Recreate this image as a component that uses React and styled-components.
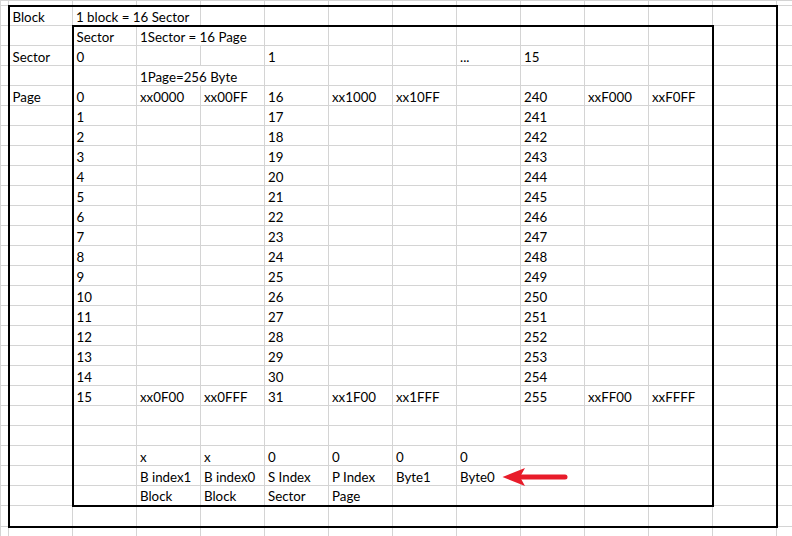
import React from 'react';
import styled, { createGlobalStyle } from 'styled-components';

const GlobalStyle = createGlobalStyle`
  html, body {
    margin: 0;
    padding: 0;
    background: #fff;
    overflow: hidden;
  }
`;

const GRID = '1px solid #d4d4d4';
const THICK = '2px solid #000';

const Sheet = styled.table`
  border-collapse: collapse;
  table-layout: fixed;
  width: ${props => props.$width}px;
  font-family: Lato, "Liberation Sans", sans-serif;
  font-size: 13.3px;
  color: #000;
`;

const Row = styled.tr`
  height: ${props => props.$height}px;
`;

const Cell = styled.td`
  position: relative;
  box-sizing: border-box;
  height: ${props => props.$height}px;
  padding: ${props => (props.$height > 10 ? '2px 3px 0' : '0')};
  white-space: nowrap;
  overflow: visible;
  vertical-align: middle;
  line-height: 16px;
  border-top: ${props => (props.$top ? THICK : GRID)};
  border-right: ${props => (props.$right ? THICK : GRID)};
  border-bottom: ${props => (props.$bottom ? THICK : GRID)};
  border-left: ${props => (props.$left ? THICK : GRID)};
`;

const Arrow = styled.svg`
  position: absolute;
  left: 44px;
  top: 1px;
  width: 70px;
  height: 20px;
  overflow: visible;
`;

const COL_WIDTHS = [8, 64, 64, 64, 64, 64, 64, 64, 64, 64, 64, 64, 64, 20];
const ROW_COUNT = 28;

// sheet content: rows[r][c] = { text, span }
const rows = Array.from({ length: ROW_COUNT }, () => ({}));
const put = (r, c, text, span = 1) => {
  rows[r][c] = { text: String(text), span };
};

put(1, 1, 'Block');
put(1, 2, '1 block = 16 Sector', 2);
put(2, 2, 'Sector');
put(2, 3, '1Sector = 16 Page', 2);
put(3, 1, 'Sector');
put(3, 2, '0');
put(3, 5, '1');
put(3, 8, '...');
put(3, 9, '15');
put(4, 3, '1Page=256 Byte', 2);
['Page', '0', 'xx0000', 'xx00FF', '16', 'xx1000', 'xx10FF', '', '240', 'xxF000', 'xxF0FF'].forEach((t, i) => {
  if (t) put(5, i + 1, t);
});
for (let i = 1; i <= 14; i++) {
  put(5 + i, 2, i);
  put(5 + i, 5, 16 + i);
  put(5 + i, 9, 240 + i);
}
['15', 'xx0F00', 'xx0FFF', '31', 'xx1F00', 'xx1FFF', '', '255', 'xxFF00', 'xxFFFF'].forEach((t, i) => {
  if (t) put(20, i + 2, t);
});
['x', 'x', '0', '0', '0', '0'].forEach((t, i) => put(23, i + 3, t));
['B index1', 'B index0', 'S Index', 'P Index', 'Byte1', 'Byte0'].forEach((t, i) => put(24, i + 3, t));
['Block', 'Block', 'Sector', 'Page'].forEach((t, i) => put(25, i + 3, t));

// thick frames: outer block and inner sector box
const OUTER = { r0: 1, r1: 26, c0: 1, c1: 12 };
const INNER = { r0: 2, r1: 25, c0: 2, c1: 11 };

const inRange = (v, a, b) => v >= a && v <= b;

const edges = (r, c, span) => {
  const last = c + span - 1;
  const e = { top: false, right: false, bottom: false, left: false };
  [OUTER, INNER].forEach(box => {
    const rowIn = inRange(r, box.r0, box.r1);
    const colIn = inRange(c, box.c0, box.c1) || inRange(last, box.c0, box.c1);
    if (r === box.r0 && colIn) e.top = true;
    if (r === box.r1 && colIn) e.bottom = true;
    if (c === box.c0 && rowIn) e.left = true;
    if (last === box.c1 && rowIn) e.right = true;
  });
  return e;
};

const RedArrow = () => (
  <Arrow viewBox="0 0 70 20">
    <line x1="18" y1="10" x2="64" y2="10" stroke="#e81c2a" strokeWidth="5" strokeLinecap="round" />
    <path d="M1.5 10 L24 1 L19 10 L24 19 Z" fill="#e81c2a" />
  </Arrow>
);

const rowHeight = r => (r === 0 ? 5 : r === 26 ? 21 : 20);

const SheetRow = ({ r }) => {
  const height = rowHeight(r);
  const cells = [];
  for (let c = 0; c < COL_WIDTHS.length; ) {
    const item = rows[r][c];
    const span = item ? item.span : 1;
    const e = edges(r, c, span);
    cells.push(
      <Cell
        key={c}
        colSpan={span}
        $height={height}
        $top={e.top}
        $right={e.right}
        $bottom={e.bottom}
        $left={e.left}
      >
        {item ? item.text : ''}
        {r === 24 && c === 8 && <RedArrow />}
      </Cell>
    );
    c += span;
  }
  return <Row $height={height}>{cells}</Row>;
};

const App = () => {
  const total = COL_WIDTHS.reduce((a, b) => a + b, 0);
  return (
    <>
      <GlobalStyle />
      <Sheet $width={total}>
        <colgroup>
          {COL_WIDTHS.map((w, i) => (
            <col key={i} style={{ width: w }} />
          ))}
        </colgroup>
        <tbody>
          {rows.map((_, r) => (
            <SheetRow key={r} r={r} />
          ))}
        </tbody>
      </Sheet>
    </>
  );
};

export default App;
